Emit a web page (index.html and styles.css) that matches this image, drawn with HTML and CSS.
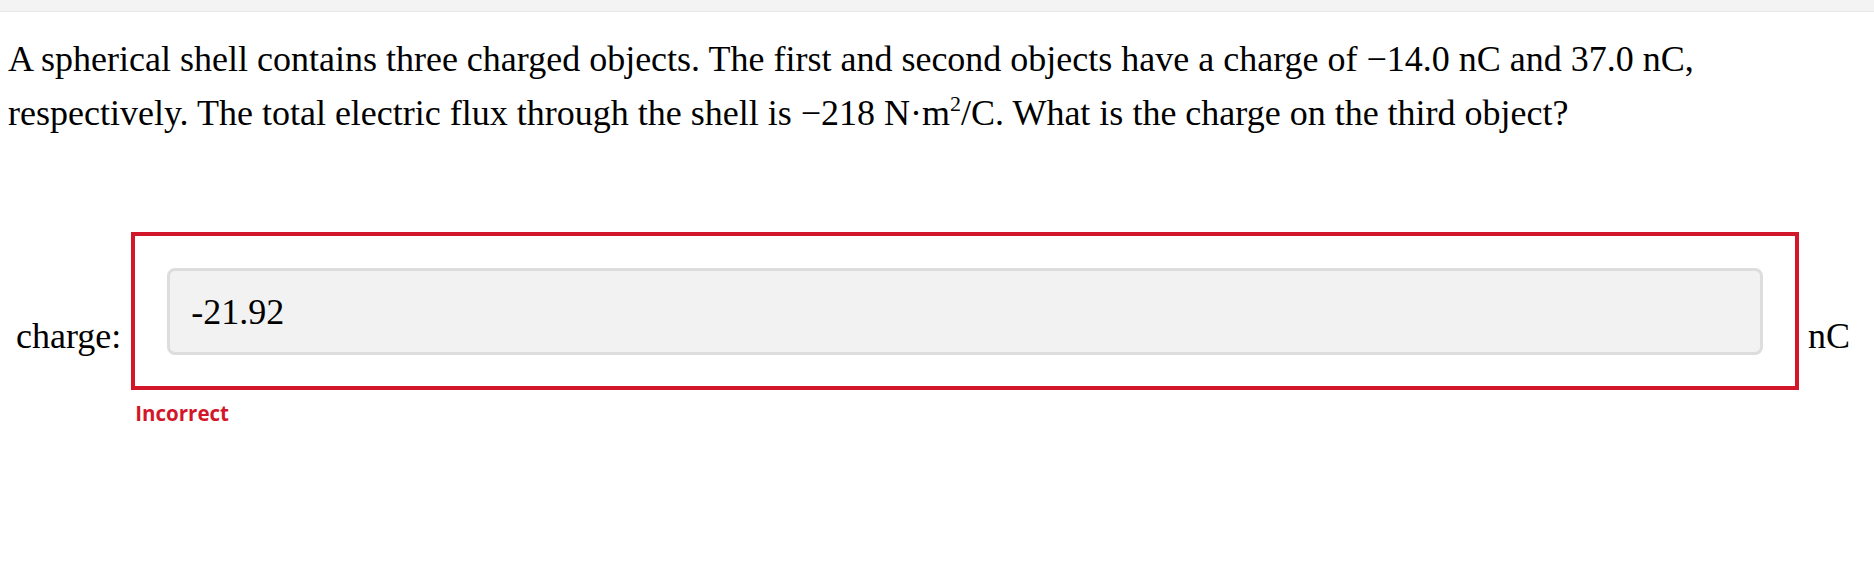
FILE: index.html
```html
<!DOCTYPE html>
<html lang="en">
<head>
    <meta charset="UTF-8">
    <meta name="viewport" content="width=device-width, initial-scale=1.0">
    <title>Electric Flux Question</title>
    <link rel="stylesheet" href="styles.css">
</head>
<body>

    <!-- Top strip -->
    <div class="topbar"></div>

    <div class="question">
        <p class="prompt">A spherical shell contains three charged objects. The first and second objects have a charge of &minus;14.0&nbsp;nC and 37.0&nbsp;nC, respectively. The total electric flux through the shell is &minus;218&nbsp;N&middot;m<span class="sup">2</span>/C. What is the charge on the third object?</p>

        <div class="answer-row">
            <label class="answer-label" for="charge">charge:</label>
            <div class="answer-field">
                <div class="field-box incorrect">
                    <input type="text" id="charge" class="answer-input" value="-21.92">
                </div>
                <div class="feedback">Incorrect</div>
            </div>
            <span class="unit">nC</span>
        </div>
    </div>

</body>
</html>
```

FILE: styles.css
```css
body {
    font-family: "Liberation Serif", "Times New Roman", serif;
    background-color: white;
    color: black;
    margin: 0;
    padding: 0;
}
.topbar {
    height: 11px;
    background-color: #f3f3f3;
    border-bottom: 1px solid #e6e6e6;
}
.question {
    padding: 0 8px;
}
.prompt {
    font-size: 36px;
    line-height: 54px;
    margin: 20px 0 0 0;
}
.prompt .sup {
    font-size: 22px;
    vertical-align: 14px;
    line-height: 1;
}
.answer-row {
    display: flex;
    align-items: center;
    margin-top: 92px;
    padding: 0 16px 0 8px;
}
.answer-label, .unit {
    font-size: 36px;
    padding-top: 3px;
}
.answer-label {
    margin-right: 10px;
}
.unit {
    margin-left: 9px;
}
.answer-field {
    flex: 1;
}
.field-box {
    padding: 32px 32px 31px 32px;
    border: 4px solid transparent;
}
.field-box.incorrect {
    border-color: #d3172a;
}
.answer-input {
    display: block;
    box-sizing: border-box;
    width: 100%;
    height: 87px;
    padding: 0 21px;
    font-family: "Liberation Serif", "Times New Roman", serif;
    font-size: 36px;
    color: black;
    background-color: #f2f2f2;
    border: 3px solid #dddddd;
    border-radius: 8px;
    outline: none;
}
.feedback {
    font-family: "Open Sans", Arial, sans-serif;
    font-weight: 700;
    font-size: 20.5px;
    line-height: 31px;
    color: #d3172a;
    margin: 8px 0 7px 4px;
}
```
